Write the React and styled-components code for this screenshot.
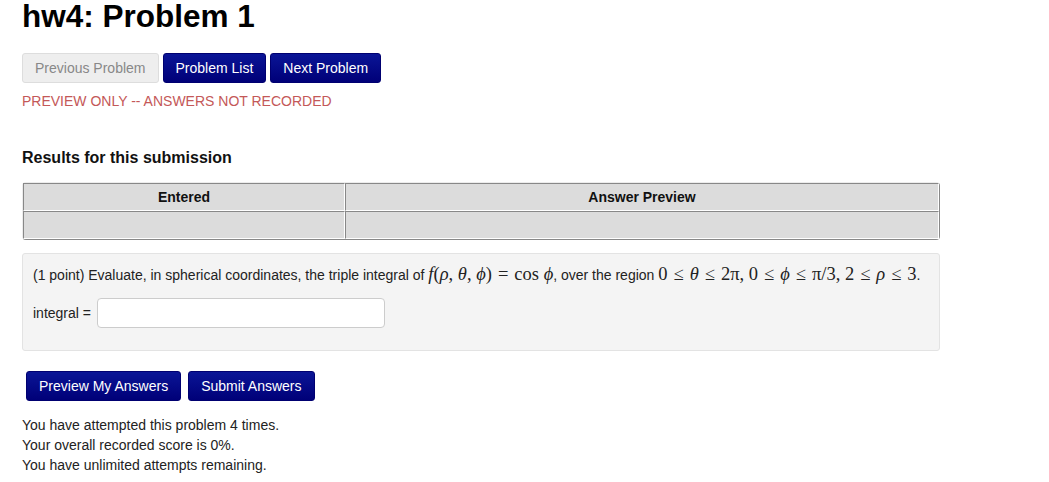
import React from 'react';
import styled, { createGlobalStyle } from 'styled-components';

const GlobalStyle = createGlobalStyle`
  body {
    margin: 0;
    background: #fff;
    font-family: "Liberation Sans", Arial, sans-serif;
    font-size: 14px;
    color: #222;
  }
`;

const Page = styled.div`
  padding: 0 22px;
  width: 918px;
`;

const Title = styled.h1`
  font-size: 31.5px;
  font-weight: bold;
  color: #000;
  margin: 0;
  line-height: 32px;
`;

const NavBar = styled.div`
  display: flex;
  gap: 4px;
  margin-top: 21px;
`;

const Button = styled.button`
  height: 30px;
  padding: 0 12px;
  font-family: "Liberation Sans", Arial, sans-serif;
  font-size: 14px;
  border-radius: 3px;
  cursor: pointer;
  color: ${p => (p.disabled ? '#888' : '#fff')};
  background: ${p => (p.disabled ? '#eee' : 'linear-gradient(#0a1596, #000078)')};
  border: 1px solid ${p => (p.disabled ? '#ddd' : '#000070')};
`;

const PreviewNote = styled.div`
  color: #c45858;
  margin-top: 10px;
  line-height: 16px;
`;

const SectionTitle = styled.h3`
  font-size: 16px;
  font-weight: bold;
  color: #111;
  margin: 40px 0 0;
  line-height: 18px;
`;

const Results = styled.table`
  width: 918px;
  margin-top: 15px;
  border-collapse: separate;
  border-spacing: 0;
  border: 1px solid;
  border-color: #ececec #888 #888 #ececec;
  border-radius: 4px;
`;

const Cell = styled.td`
  background: #dcdcdc;
  height: 26px;
  text-align: center;
  font-weight: ${p => (p.head ? 'bold' : 'normal')};
  color: #111;
  border: 1px solid;
  border-color: #888 #fff #fff #888;
  padding: 0;
  width: ${p => p.w};
`;

const ProblemBox = styled.div`
  margin-top: 13px;
  background: #f4f4f4;
  border: 1px solid #e3e3e3;
  border-radius: 3px;
  padding: 9px 10px 22px;
`;

const Statement = styled.p`
  margin: 0;
  line-height: 22px;
  color: #222;
`;

const Math = styled.span`
  font-family: "Liberation Serif", "Times New Roman", serif;
  font-size: 18.5px;
  font-style: ${p => (p.upright ? 'normal' : 'italic')};
`;

const Rel = styled.span`
  font-family: "Liberation Serif", "Times New Roman", serif;
  font-size: 18.5px;
  margin: 0 6px;
`;

const AnswerRow = styled.div`
  display: flex;
  align-items: center;
  gap: 6px;
  margin-top: 12px;
`;

const Input = styled.input`
  width: 288px;
  height: 30px;
  box-sizing: border-box;
  border: 1px solid #ccc;
  border-radius: 4px;
  background: #fff;
`;

const SubmitBar = styled.div`
  display: flex;
  gap: 7px;
  padding-left: 4px;
  margin-top: 20px;
`;

const Attempts = styled.div`
  margin-top: 14px;
  line-height: 20px;
  color: #222;
`;

export default function App() {
  return (
    <>
      <GlobalStyle />
      <Page>
        <Title>hw4: Problem 1</Title>
        <NavBar>
          <Button disabled>Previous Problem</Button>
          <Button>Problem List</Button>
          <Button>Next Problem</Button>
        </NavBar>
        <PreviewNote>PREVIEW ONLY -- ANSWERS NOT RECORDED</PreviewNote>

        <SectionTitle>Results for this submission</SectionTitle>
        <Results>
          <tbody>
            <tr>
              <Cell head w="320px">Entered</Cell>
              <Cell head>Answer Preview</Cell>
            </tr>
            <tr>
              <Cell />
              <Cell />
            </tr>
          </tbody>
        </Results>

        <ProblemBox>
          <Statement>
            (1 point) Evaluate, in spherical coordinates, the triple integral of{' '}
            <Math>f</Math>
            <Math upright>(</Math>
            <Math>ρ</Math>
            <Math upright>, </Math>
            <Math>θ</Math>
            <Math upright>, </Math>
            <Math>ϕ</Math>
            <Math upright>)</Math>
            <Rel>=</Rel>
            <Math upright>cos </Math>
            <Math>ϕ</Math>, over the region{' '}
            <Math upright>0</Math>
            <Rel>≤</Rel>
            <Math>θ</Math>
            <Rel>≤</Rel>
            <Math upright>2π, 0</Math>
            <Rel>≤</Rel>
            <Math>ϕ</Math>
            <Rel>≤</Rel>
            <Math upright>π/3, 2</Math>
            <Rel>≤</Rel>
            <Math>ρ</Math>
            <Rel>≤</Rel>
            <Math upright>3</Math>.
          </Statement>
          <AnswerRow>
            <span>integral =</span>
            <Input type="text" />
          </AnswerRow>
        </ProblemBox>

        <SubmitBar>
          <Button>Preview My Answers</Button>
          <Button>Submit Answers</Button>
        </SubmitBar>

        <Attempts>
          You have attempted this problem 4 times.
          <br />
          Your overall recorded score is 0%.
          <br />
          You have unlimited attempts remaining.
        </Attempts>
      </Page>
    </>
  );
}
